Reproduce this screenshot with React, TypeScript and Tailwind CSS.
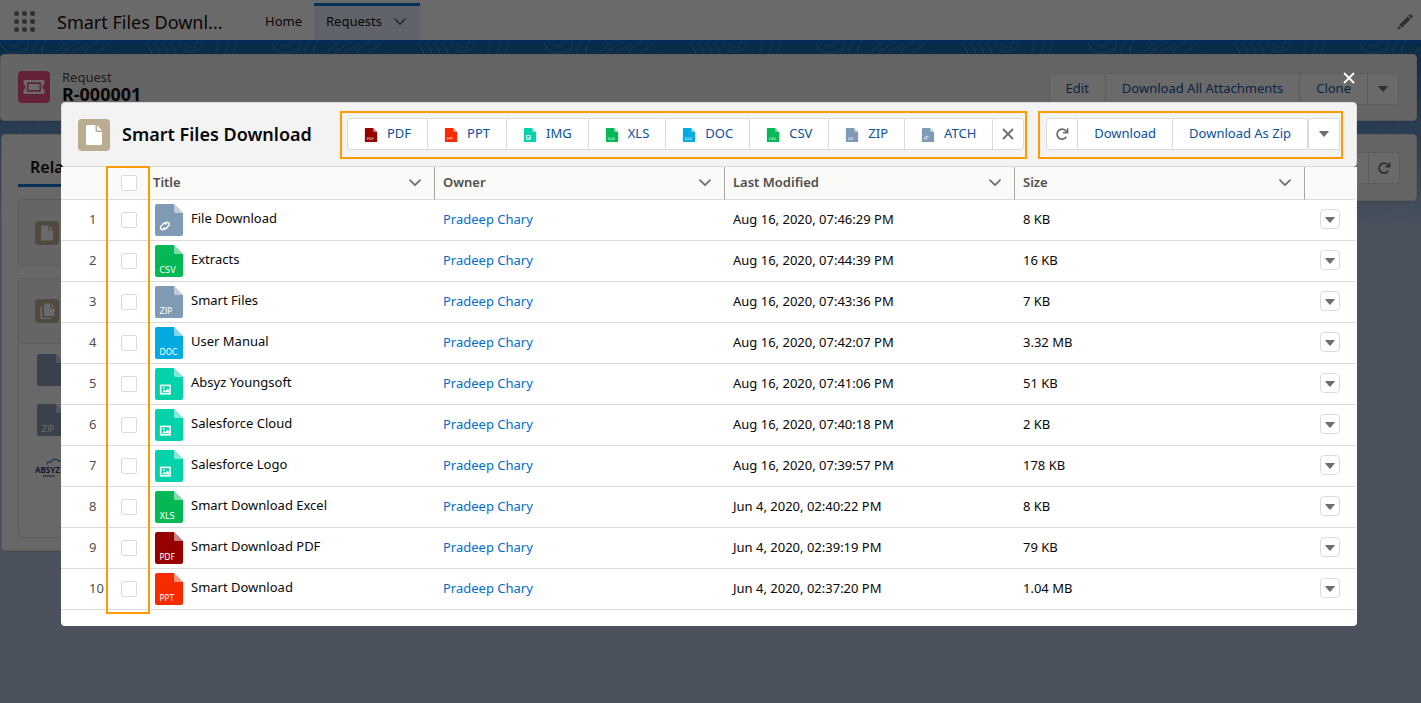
import React, { useState } from 'react';

type FileKind = 'pdf' | 'ppt' | 'img' | 'xls' | 'doc' | 'csv' | 'zip' | 'atch';

const kindColors: Record<FileKind, string> = {
  pdf: '#960000',
  ppt: '#f72b00',
  img: '#04d2aa',
  xls: '#04b955',
  doc: '#03abe2',
  csv: '#04b955',
  zip: '#7f9ab4',
  atch: '#7f9ab4',
};

const filters: FileKind[] = ['pdf', 'ppt', 'img', 'xls', 'doc', 'csv', 'zip', 'atch'];

const files: { title: string; kind: FileKind; modified: string; size: string }[] = [
  { title: 'File Download', kind: 'atch', modified: 'Aug 16, 2020, 07:46:29 PM', size: '8 KB' },
  { title: 'Extracts', kind: 'csv', modified: 'Aug 16, 2020, 07:44:39 PM', size: '16 KB' },
  { title: 'Smart Files', kind: 'zip', modified: 'Aug 16, 2020, 07:43:36 PM', size: '7 KB' },
  { title: 'User Manual', kind: 'doc', modified: 'Aug 16, 2020, 07:42:07 PM', size: '3.32 MB' },
  { title: 'Absyz Youngsoft', kind: 'img', modified: 'Aug 16, 2020, 07:41:06 PM', size: '51 KB' },
  { title: 'Salesforce Cloud', kind: 'img', modified: 'Aug 16, 2020, 07:40:18 PM', size: '2 KB' },
  { title: 'Salesforce Logo', kind: 'img', modified: 'Aug 16, 2020, 07:39:57 PM', size: '178 KB' },
  { title: 'Smart Download Excel', kind: 'xls', modified: 'Jun 4, 2020, 02:40:22 PM', size: '8 KB' },
  { title: 'Smart Download PDF', kind: 'pdf', modified: 'Jun 4, 2020, 02:39:19 PM', size: '79 KB' },
  { title: 'Smart Download', kind: 'ppt', modified: 'Jun 4, 2020, 02:37:20 PM', size: '1.04 MB' },
];

function FileIcon({ kind, className, plain }: { kind: FileKind; className: string; plain?: boolean }) {
  const hasLabel = kind !== 'img' && kind !== 'atch';
  return (
    <svg viewBox="0 0 28 32" className={className} aria-hidden="true">
      <path d="M2 0H19L28 9V30a2 2 0 0 1-2 2H2a2 2 0 0 1-2-2V2a2 2 0 0 1 2-2z" fill={kindColors[kind]} />
      <path d="M19 0V7.5A1.5 1.5 0 0 0 20.5 9H28z" fill="#fff" opacity="0.5" />
      {hasLabel && !plain && (
        <text x="4.5" y="28" fontSize="8" fill="#fff" fontFamily="DejaVu Sans, sans-serif">
          {kind.toUpperCase()}
        </text>
      )}
      {kind === 'img' && (
        <>
          <rect x="5.7" y="17.4" width="9.4" height="8.4" fill="none" stroke="#fff" strokeWidth="1.6" />
          <path d="M7.2 24.2l2-2.6 1.5 1.4 2-2.8 1.4 2.6v1.4z" fill="#fff" />
          <circle cx="8.8" cy="20" r="0.9" fill="#fff" />
        </>
      )}
      {kind === 'atch' && !plain && (
        <g fill="none" stroke="#fff" strokeWidth="1.3" strokeLinecap="round" transform="rotate(40 10 22)">
          <path d="M8.6 20.5v-1.3a2 2 0 0 1 4 0v3.6a2 2 0 0 1-2.6 1.9" />
          <path d="M11.2 23.6v1.3a2 2 0 0 1-4 0v-3.600a2 2 0 0 1 2.600-1.900" />
        </g>
      )}
    </svg>
  );
}

function Chevron() {
  return (
    <svg viewBox="0 0 12 8" className="h-2 w-3" fill="none" stroke="#706e6b" strokeWidth="1.7" strokeLinecap="round" strokeLinejoin="round" aria-hidden="true">
      <path d="M1 1.2l5 5 5-5" />
    </svg>
  );
}

function Caret({ className }: { className: string }) {
  return (
    <svg viewBox="0 0 10 6" className={className} fill="#706e6b" aria-hidden="true">
      <path d="M0.6 0h8.8q.6.2.2.8L5.5 5.6q-.5.5-1 0L.4.8Q0 .2.6 0z" />
    </svg>
  );
}

function Refresh() {
  return (
    <svg viewBox="0 0 14 14" className="size-3.5" fill="none" stroke="#706e6b" strokeWidth="1.8" aria-hidden="true">
      <path d="M11.3 9.8A5 5 0 1 1 10.6 3.6L12 5" />
      <path d="M12.6 1.2V5.8H8" strokeWidth="1.6" />
    </svg>
  );
}

function Cross({ className }: { className: string }) {
  return (
    <svg viewBox="0 0 12 12" className={className} fill="none" stroke="currentColor" strokeWidth="1.8" strokeLinecap="round" aria-hidden="true">
      <path d="M1.5 1.5l9 9M10.5 1.5l-9 9" />
    </svg>
  );
}

function DocGlyph({ className, stacked }: { className: string; stacked?: boolean }) {
  return (
    <span className={`flex shrink-0 items-center justify-center rounded bg-[#baac93] ${className}`}>
      <svg viewBox="0 0 32 32" className="size-full" fill="#fff" aria-hidden="true">
        {stacked ? (
          <>
            <path d="M13.5 6H20v5q0 1.5 1.5 1.5H26V21a1.5 1.5 0 0 1-1.5 1.5h-11A1.5 1.5 0 0 1 12 21V7.5A1.5 1.5 0 0 1 13.5 6z" />
            <path d="M22 6l4 4.5h-3.5q-.5 0-.5-.5z" />
            <path d="M9.5 10v13.5q0 1.5 1.5 1.5h11.5q-.3 1.5-1.5 1.5H9A2 2 0 0 1 7 24.5v-13Q7 10.2 9.5 10z" />
          </>
        ) : (
          <>
            <path d="M9.5 6H17.5v5.5q0 1.500 1.500 1.500h5V24.5A1.5 1.5 0 0 1 22.5 26h-13A1.5 1.5 0 0 1 8 24.5v-17A1.5 1.5 0 0 1 9.5 6z" />
            <path d="M19 6.200L24 11.500h-4.400q-.6 0-.6-.6z" />
          </>
        )}
      </svg>
    </span>
  );
}

function Contours() {
  return (
    <svg className="absolute inset-x-0 top-0 h-60 w-full" fill="none" stroke="#fff" aria-hidden="true">
      <defs>
        <pattern id="contours" width="272" height="240" patternUnits="userSpaceOnUse">
          <g stroke="#fff" strokeWidth="1.2">
            <path strokeOpacity="0.16" d="M0 0Q6 12 18 10T28 0M8 0q6 6 12 0M36 0q-6 8 0 14M44 0q-4 8 0 14M50 14L66 0M58 14L76 0M66 14L88 0M82 14Q88 2 98 0" />
            <path strokeOpacity="0.16" d="M96 10l14-10M112 14l4-6M146 0l8 14M154 0l8 14M162 0l8 14M170 0l8 14M178 0Q190 18 204 0M184 0q8 10 14 0M212 14q6-6 6-14M222 14q6-6 6-14M230 14q6-6 6-14" />
            <path strokeOpacity="0.12" d="M20 90q4-14 20-16t26 12M34 90q6-12 16-10t12 10M120 80q16-14 40 0t60-6 52 8" />
            <path strokeOpacity="0.08" d="M0 160q20-14 42-4t44-20 60 6 60-10 66 28M0 180q30-12 56-6t52-22 60 14 104 14M160 160q-4 26 18 28t30-24 64 4" />
          </g>
        </pattern>
      </defs>
      <rect width="100%" height="100%" fill="url(#contours)" stroke="none" />
    </svg>
  );
}

const plainButton = 'flex h-8 items-center justify-center border border-[#dddbda] bg-white text-[13px] text-[#0b4f9e]';

function RequestPage() {
  return (
    <div className="flex min-h-screen flex-col bg-[#b0c4df]">
      <header className="flex h-[43px] items-stretch border-b-[3px] border-[#0064dc] bg-white">
        <button className="ml-3.5 flex items-center" aria-label="App Launcher">
          <svg viewBox="0 0 21 21" className="mt-0.5 size-[21px]" fill="#706e6b" aria-hidden="true">
            {[2.5, 10.5, 18.5].map((y) => [2.5, 10.5, 18.5].map((x) => <circle key={`${x}-${y}`} cx={x} cy={y} r="2.5" />))}
          </svg>
        </button>
        <span className="ml-[22px] w-[184px] pt-2 text-[18px] leading-7 text-[#080707]">Smart Files Downl...</span>
        <nav className="flex pt-[3px] text-[13px] text-[#080707]">
          <a href="#home" className="flex items-center px-6">Home</a>
          <a href="#requests" className="-ml-3 flex items-center gap-3 border-t-[3px] border-[#0070d2] bg-[#e3edfd] pb-[3px] pl-3 pr-3.5">
            Requests
            <Chevron />
          </a>
        </nav>
        <button className="ml-auto mr-2 flex items-center pt-1" aria-label="Edit navigation">
          <svg viewBox="0 0 14 14" className="size-4" fill="#706e6b" aria-hidden="true">
            <path d="M9.3 2.2l2.5 2.5-7.4 7.4-2.5-2.5zM10 1.5l1-1q.6-.5 1.2 0l1.3 1.3q.5.6 0 1.2l-1 1zM1.5 10.5l2 2L.7 13.5q-.5 0-.3-.5z" />
          </svg>
        </button>
      </header>

      <main className="relative flex grow flex-col gap-[13px] bg-gradient-to-b from-[#0061a8] to-[#b0c4df] to-[190px] pr-1 pt-[11px]">
        <Contours />
        <section className="relative flex h-[67px] items-start justify-between rounded border border-[#dddbda] bg-[#f3f3f2] pr-[17px] shadow-sm">
          <div className="flex gap-3 pl-[17px] pt-3.5">
            <span className="mt-0.5 size-8 rounded bg-[#eb4d7d]">
              <svg viewBox="0 0 32 32" fill="#fff" aria-hidden="true">
                <path fillRule="evenodd" d="M7 9h18q1.5 0 1.5 1.5v2.8a2.8 2.8 0 0 0 0 5.4v2.8Q26.5 23 25 23H7q-1.5 0-1.5-1.5v-2.8a2.8 2.8 0 0 0 0-5.4v-2.800Q5.5 9 7 9zm3 2.200q-1 0-1 1v7.600q0 1 1 1h12q1 0 1-1v-7.600q0-1-1-1z" />
                <rect x="10.5" y="12.9" width="11" height="6.2" rx="0.5" />
              </svg>
            </span>
            <div className="text-[#080707]">
              <p className="text-[13px] leading-4 text-[#3e3e3c]">Request</p>
              <h1 className="text-[18px] font-bold leading-[18px]">R-000001</h1>
            </div>
          </div>
          <div className="flex pt-[18px]">
            <button className={`${plainButton} rounded-l px-4`}>Edit</button>
            <button className={`${plainButton} -ml-px px-4`}>Download All Attachments</button>
            <button className={`${plainButton} -ml-px px-4`}>Clone</button>
            <button className={`${plainButton} -ml-px w-8 rounded-r`} aria-label="More actions">
              <Caret className="h-1.5 w-2.5" />
            </button>
          </div>
        </section>

        <div className="relative flex items-start gap-3 pl-px">
          <section className="w-2/3 rounded border border-[#dddbda] bg-[#f9f9f9] px-4 pb-3 pt-4 shadow-sm">
            <div className="flex h-9 border-b border-[#dddbda]">
              <h2 className="-mb-px border-b-[3px] border-[#0070d2] px-3 text-[16px] font-semibold leading-8 text-[#080707]">Related</h2>
            </div>
            <div className="mt-3 flex h-[67px] items-center rounded border border-[#dddbda] bg-[#f3f3f2] px-4">
              <DocGlyph className="size-6" />
            </div>
            <div className="mt-3 h-[260px] rounded border border-[#dddbda]">
              <div className="flex h-[65px] items-center border-b border-[#dddbda] bg-[#f3f3f2] px-4">
                <DocGlyph className="size-6" stacked />
              </div>
              <div className="flex flex-col gap-[18px] px-[18px] pt-2.5">
                <FileIcon kind="atch" className="h-8 w-7" plain />
                <FileIcon kind="zip" className="h-8 w-7" />
                <svg viewBox="0 0 40 20" className="-ml-0.5 mt-1 h-5 w-10" aria-hidden="true">
                  <path d="M12 6.5q0-3 4-2.5 3-5 8-1 6-1 6 5" fill="none" stroke="#2b8fc0" strokeWidth="1.3" />
                  <text x="0" y="15" fontSize="8" fontWeight="bold" fill="#25346f">ABSYZ</text>
                  <path d="M8 18h12" stroke="#25346f" />
                </svg>
              </div>
            </div>
          </section>
          <section className="flex h-[67px] grow items-center justify-end rounded border border-[#dddbda] bg-[#f3f3f2] pr-4 shadow-sm">
            <button className={`${plainButton} rounded-l px-4`}>Follow</button>
            <button className={`${plainButton} -ml-px w-8 rounded-r`} aria-label="Refresh record">
              <Refresh />
            </button>
          </section>
        </div>
      </main>
    </div>
  );
}

function FilesTable() {
  const [checked, setChecked] = useState<number[]>([]);
  const allChecked = checked.length === files.length;

  const toggle = (i: number) =>
    setChecked(checked.includes(i) ? checked.filter((c) => c !== i) : [...checked, i]);

  const box = 'block size-4 appearance-none rounded-xs border border-[#dddbda] bg-white checked:bg-[#0070d2]';

  return (
    <div className="rounded-b bg-white pb-4">
      <div className="bg-[#fafaf9] pr-0.5">
        <table className="w-full table-fixed border-separate border-spacing-0 bg-white text-left text-[13px] text-[#080707]">
          <colgroup>
            <col className="w-[52px]" />
            <col className="w-8" />
            <col />
            <col />
            <col />
            <col />
            <col className="w-[50px]" />
          </colgroup>
          <thead>
            <tr className="h-[33px] bg-[#fafaf9] text-[#514f4d]">
              <th className="border-b border-[#dddbda]" />
              <th className="border-b border-[#dddbda] px-2">
                <input
                  type="checkbox"
                  aria-label="Select all files"
                  className={box}
                  checked={allChecked}
                  onChange={() => setChecked(allChecked ? [] : files.map((_, i) => i))}
                />
              </th>
              {['Title', 'Owner', 'Last Modified', 'Size'].map((name) => (
                <th key={name} className="border-b border-r border-b-[#dddbda] border-r-[#a8a6a4] p-0 pl-2 pr-[13px] font-semibold">
                  <div className="flex items-center justify-between">
                    {name}
                    <Chevron />
                  </div>
                </th>
              ))}
              <th className="border-b border-[#dddbda]" />
            </tr>
          </thead>
          <tbody>
            {files.map((file, i) => (
              <tr key={file.title} className="h-[41px]">
                <td className="border-b border-[#dddbda] p-0 pl-7 text-[#514f4d]">{i + 1}</td>
                <td className="border-b border-[#dddbda] px-2 py-0">
                  <input
                    type="checkbox"
                    aria-label={`Select ${file.title}`}
                    className={box}
                    checked={checked.includes(i)}
                    onChange={() => toggle(i)}
                  />
                </td>
                <td className="border-b border-[#dddbda] p-0 pl-2.5">
                  <div className="flex items-center gap-2">
                    <FileIcon kind={file.kind} className="h-8 w-7" />
                    <span className="pb-0.5">{file.title}</span>
                  </div>
                </td>
                <td className="border-b border-[#dddbda] p-0 pl-2">
                  <a href="#owner" className="text-[#006dcc]">Pradeep Chary</a>
                </td>
                <td className="border-b border-[#dddbda] p-0 pl-2">{file.modified}</td>
                <td className="border-b border-[#dddbda] p-0 pl-2">{file.size}</td>
                <td className="border-b border-[#dddbda] p-0 pb-0.5 pl-[15px]">
                  <button
                    className="flex size-5 items-center justify-center rounded border border-[#dddbda] bg-white"
                    aria-label={`Actions for ${file.title}`}
                  >
                    <Caret className="mt-px h-1.5 w-2.5" />
                  </button>
                </td>
              </tr>
            ))}
          </tbody>
        </table>
      </div>
    </div>
  );
}

export default function App() {
  return (
    <div className="font-['Noto_Sans',sans-serif]">
      <RequestPage />
      <div className="absolute inset-0 bg-[rgba(8,7,7,0.6)] pl-[61px] pr-16 pt-[102px]">
        <div role="dialog" aria-label="Smart Files Download" className="relative">
          <button className="absolute -top-8 right-0 p-0.5 text-white" aria-label="Close">
            <Cross className="size-3" />
          </button>
          <div className="flex h-[65px] items-center rounded border border-[#dddbda] bg-[#f3f3f3] pl-4 pr-[13px]">
            <DocGlyph className="size-8" />
            <h2 className="ml-3 w-[218px] whitespace-nowrap text-[18px] font-semibold text-[#080707]">Smart Files Download</h2>
            <div className="flex border-2 border-[#ff9a00] pb-[7px] pl-[5px] pr-px pt-[5px]">
              {filters.map((kind, i) => (
                <button key={kind} className={`${plainButton} gap-[9px] px-4 ${i === 0 ? 'rounded-l' : '-ml-px'}`}>
                  <FileIcon kind={kind} className="mt-0.5 h-3.5 w-3.5" />
                  {kind.toUpperCase()}
                </button>
              ))}
              <button className={`${plainButton} -ml-px w-8 rounded-r`} aria-label="Clear filter">
                <Cross className="size-3 text-[#706e6b]" />
              </button>
            </div>
            <div className="ml-auto flex border-2 border-[#ff9a00] pb-[7px] pl-1.5 pr-px pt-[5px]">
              <button className={`${plainButton} w-8 rounded-l`} aria-label="Refresh files">
                <Refresh />
              </button>
              <button className={`${plainButton} -ml-px px-4`}>Download</button>
              <button className={`${plainButton} -ml-px px-4`}>Download As Zip</button>
              <button className={`${plainButton} w-8 rounded-l`} aria-label="More download options">
                <Caret className="h-1.5 w-2.5" />
              </button>
            </div>
          </div>
          <FilesTable />
          <div className="pointer-events-none absolute bottom-3 left-[45px] top-16 w-11 border-2 border-[#ff9a00]" />
        </div>
      </div>
    </div>
  );
}
